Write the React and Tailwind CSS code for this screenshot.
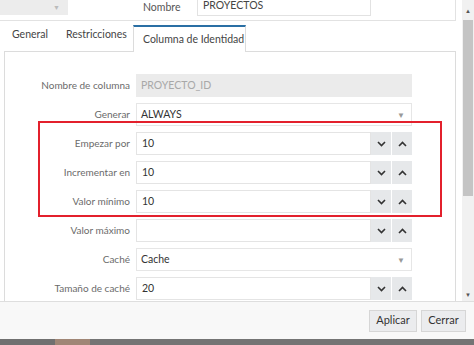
import React from 'react';

const font = { fontFamily: 'Lato, "Open Sans", sans-serif' };

function Chevron({ up }) {
  return (
    <svg width="9" height="6" viewBox="0 0 9 6" className="text-[#333]">
      <path
        d={up ? 'M1 5 L4.5 1.5 L8 5' : 'M1 1 L4.5 4.5 L8 1'}
        fill="none"
        stroke="currentColor"
        strokeWidth="1.6"
      />
    </svg>
  );
}

function Caret() {
  return <span className="text-[8px] leading-none text-[#999]">▼</span>;
}

function Row({ label, children }) {
  return (
    <div className="flex items-center h-[23px]">
      <div className="w-[126px] pr-[1px] text-right text-[10px] text-[#6b6b6b] whitespace-nowrap">
        {label}
      </div>
      <div className="ml-[5px] w-[276px] h-full">{children}</div>
    </div>
  );
}

function SpinInput({ value }) {
  return (
    <div className="flex h-full">
      <div className="flex-1 flex items-center pl-[5px] border border-[#e4e4e4] bg-white text-[10.5px] text-[#333]">
        {value}
      </div>
      <button className="w-[20px] flex items-center justify-center bg-[#e6e8ea]">
        <Chevron />
      </button>
      <button className="w-[20px] ml-px flex items-center justify-center bg-[#e6e8ea]">
        <Chevron up />
      </button>
    </div>
  );
}

function SelectInput({ value }) {
  return (
    <div className="flex items-center justify-between h-full pl-[4px] pr-[6px] border border-[#e6e6e6] bg-white text-[10.5px] text-[#333]">
      <span>{value}</span>
      <Caret />
    </div>
  );
}

export default function App() {
  return (
    <div className="w-[474px] h-[345px] overflow-hidden bg-white flex flex-col relative" style={font}>
      <div className="h-[301px] flex">
        <div className="w-[462px] flex flex-col">
          {/* header */}
          <div className="h-[21px] w-[456px] flex items-start border-b border-r border-[#e2e2e2]">
            <div className="w-[68px] h-[15px] bg-[#ececec] flex items-center justify-end pr-[8px]">
              <span className="text-[7px] text-[#bbb]">▼</span>
            </div>
            <div className="ml-[75px] w-[54px] pt-px text-[10.5px] leading-[13px] text-[#555]">Nombre</div>
            <div className="w-[174px] h-[16px] border-x border-b border-[#e2e2e2] flex items-start pl-[5px] text-[10.5px] leading-[10px] text-[#444] overflow-hidden">
              PROYECTOS
            </div>
          </div>
          {/* tabs */}
          <div className="h-[30px] flex items-end text-[10.5px] text-[#444]">
            <div className="w-[66px] pl-[12px] pb-[8px]">General</div>
            <div className="w-[67px] pb-[8px]">Restricciones</div>
            <div className="w-[113px] h-[27px] border-t-2 border-x border-t-[#2a6fa4] border-x-[#dcdcdc] bg-white flex items-center pl-[9px] -mb-px relative whitespace-nowrap">
              Columna de Identidad
            </div>
          </div>
          {/* panel */}
          <div className="flex-1 ml-[4px] w-[452px] border-t border-x border-[#dcdcdc] pt-[22px] flex flex-col gap-[6px]">
            <Row label="Nombre de columna">
              <div className="h-full bg-[#ebebeb] flex items-center pl-[5px] text-[10.5px] text-[#a8a8a8]">
                PROYECTO_ID
              </div>
            </Row>
            <Row label="Generar">
              <SelectInput value="ALWAYS" />
            </Row>
            <Row label="Empezar por">
              <SpinInput value="10" />
            </Row>
            <Row label="Incrementar en">
              <SpinInput value="10" />
            </Row>
            <Row label="Valor mínimo">
              <SpinInput value="10" />
            </Row>
            <Row label="Valor máximo">
              <SpinInput value="" />
            </Row>
            <Row label="Caché">
              <SelectInput value="Cache" />
            </Row>
            <Row label="Tamaño de caché">
              <SpinInput value="20" />
            </Row>
          </div>
        </div>
        {/* scrollbar */}
        <div className="w-[12px] bg-[#f1f1f1] flex flex-col items-center">
          <div className="h-[20px] flex items-center justify-center text-[6px] text-[#555]">▲</div>
          <div className="w-[10px] h-[176px] bg-[#c4c4c4]" />
          <div className="flex-1" />
          <div className="h-[14px] flex items-center justify-center text-[6px] text-[#555]">▼</div>
        </div>
      </div>
      {/* footer */}
      <div className="h-[38px] border-t border-[#dedede] bg-[#f8f8f8] flex items-center justify-end gap-[4px] pr-[8px]">
        <button className="h-[22px] w-[48px] bg-[#ebecee] border border-[#d6d6d6] text-[11px] text-[#333]">
          Aplicar
        </button>
        <button className="h-[22px] w-[45px] bg-[#ebecee] border border-[#d6d6d6] text-[11px] text-[#333]">
          Cerrar
        </button>
      </div>
      <div className="flex-1 flex">
        <div className="w-[55px] bg-[#707070]" />
        <div className="w-[35px] bg-[#a08676]" />
        <div className="flex-1 bg-[#747474]" />
      </div>
      {/* highlight annotation */}
      <div className="absolute left-[38px] top-[121px] w-[404px] h-[96px] border-2 border-[#e3202c] pointer-events-none" />
    </div>
  );
}
